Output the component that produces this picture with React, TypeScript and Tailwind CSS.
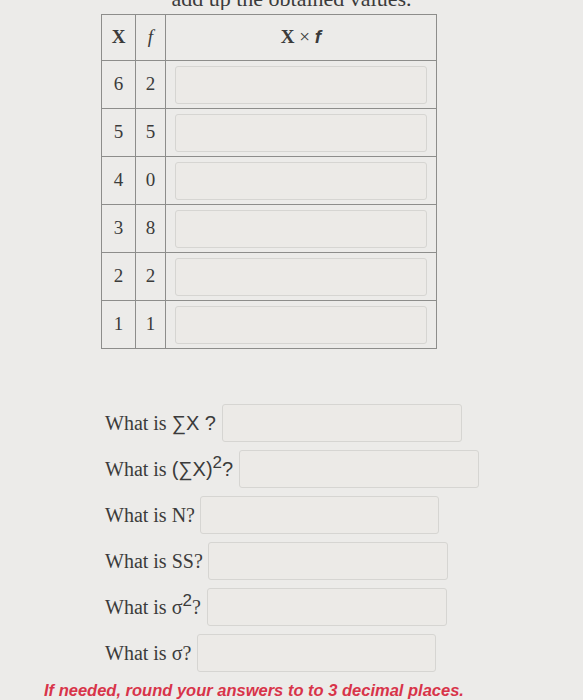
const rows = [
  [6, 2],
  [5, 5],
  [4, 0],
  [3, 8],
  [2, 2],
  [1, 1],
];

function Box({w}: {w: string}) {
  return <div className={`h-[38px] ${w} rounded-[3px] border border-[#d6d5d2] bg-[#eceae7]`}/>;
}

export default function App() {
  const serif = {fontFamily: '"Liberation Serif", "Times New Roman", serif'};
  const sans = {fontFamily: '"Liberation Sans", Arial, sans-serif'};

  return (
    <div className="h-[700px] w-[583px] overflow-hidden bg-[#ecebe9] text-[#3b3b3b]" style={serif}>
      {/* cut-off instruction line */}
      <div className="h-[10px] overflow-hidden">
        <div className="-mt-[13px] text-center text-[22px] leading-[24px]">add up the obtained values.</div>
      </div>

      <table className="ml-[101px] mt-[4px] w-[336px] border-collapse text-[19px]">
        <thead>
          <tr className="h-[46px]">
            <th className="w-[34px] border border-[#8d8d8b] font-bold">X</th>
            <th className="w-[30px] border border-[#8d8d8b] font-normal italic">f</th>
            <th className="border border-[#8d8d8b] font-bold">
              X <span className="font-normal">×</span> <span className="italic" style={sans}>f</span>
            </th>
          </tr>
        </thead>
        <tbody>
          {rows.map(([x, f]) => (
            <tr key={x} className="h-[48px]">
              <td className="border border-[#8d8d8b] text-center">{x}</td>
              <td className="border border-[#8d8d8b] text-center">{f}</td>
              <td className="border border-[#8d8d8b] px-[9px]">
                <Box w="w-full"/>
              </td>
            </tr>
          ))}
        </tbody>
      </table>

      <div className="ml-[105px] mt-[55px] flex flex-col gap-[8px] text-[20px]">
        <div className="flex items-center gap-[6px]">
          <span>What is <span style={sans}>∑X ?</span></span>
          <Box w="w-[240px]"/>
        </div>
        <div className="flex items-center gap-[6px]">
          <span>What is <span style={sans}>(∑X)<sup className="text-[17px]">2</sup>?</span></span>
          <Box w="w-[240px]"/>
        </div>
        <div className="flex items-center gap-[5px]">
          <span>What is N?</span>
          <Box w="w-[239px]"/>
        </div>
        <div className="flex items-center gap-[5px]">
          <span>What is SS?</span>
          <Box w="w-[240px]"/>
        </div>
        <div className="flex items-center gap-[6px]">
          <span>What is σ<sup className="text-[17px]" style={sans}>2</sup>?</span>
          <Box w="w-[240px]"/>
        </div>
        <div className="flex items-center gap-[6px]">
          <span>What is σ?</span>
          <Box w="w-[239px]"/>
        </div>
      </div>

      <div className="ml-[44px] mt-[6px] text-[16.5px] font-bold italic text-[#d8344a]" style={sans}>
        If needed, round your answers to to 3 decimal places.
      </div>
    </div>
  );
}
